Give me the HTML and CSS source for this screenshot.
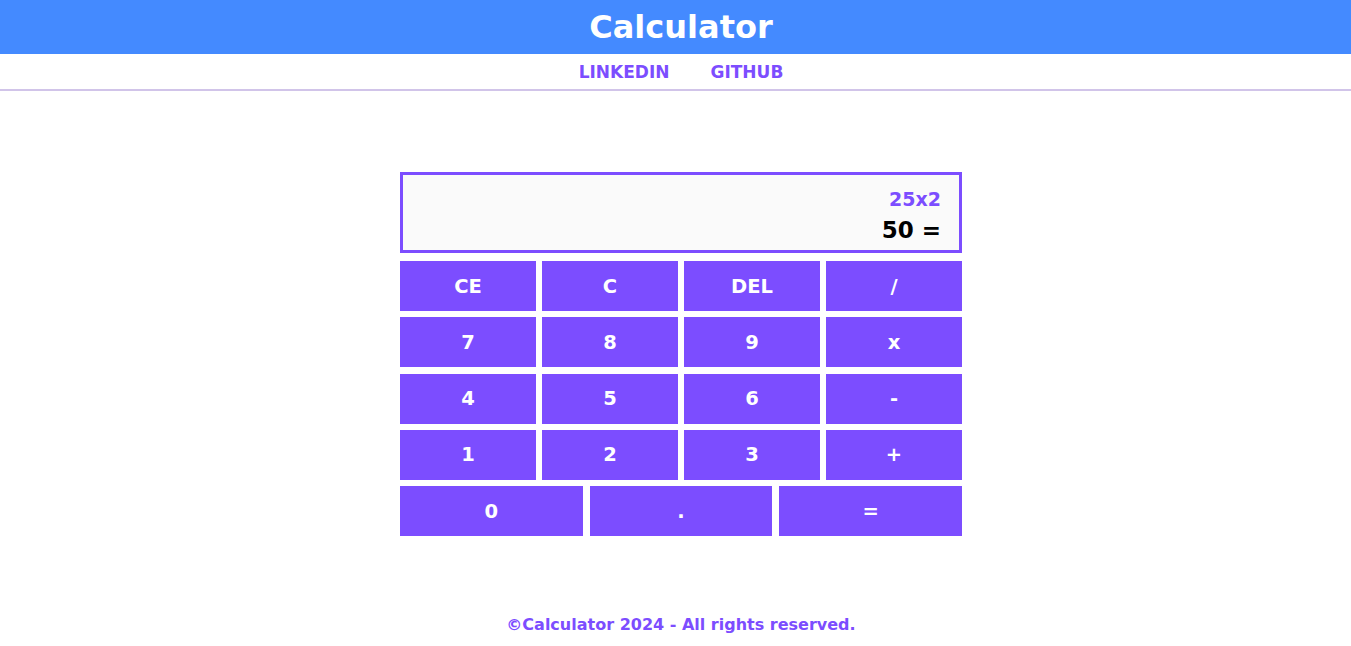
FILE: index.html
```html
<!DOCTYPE html>
<html lang="en">
<head>
<meta charset="utf-8">
<title>Calculator</title>
<link rel="stylesheet" href="styles.css">
</head>
<body>
<header class="site-header">
  <h1 class="title">Calculator</h1>
</header>
<nav class="site-nav">
  <a class="nav-link" href="#">LINKEDIN</a>
  <a class="nav-link" href="#">GITHUB</a>
</nav>
<main class="main">
  <div class="calculator">
    <div class="display">
      <div class="expr">25x2</div>
      <div class="result">50 =</div>
    </div>
    <div class="keys">
      <button class="key">CE</button>
      <button class="key">C</button>
      <button class="key">DEL</button>
      <button class="key">/</button>
      <button class="key">7</button>
      <button class="key">8</button>
      <button class="key">9</button>
      <button class="key">x</button>
      <button class="key">4</button>
      <button class="key">5</button>
      <button class="key">6</button>
      <button class="key">-</button>
      <button class="key">1</button>
      <button class="key">2</button>
      <button class="key">3</button>
      <button class="key">+</button>
    </div>
    <div class="keys-last">
      <button class="key">0</button>
      <button class="key">.</button>
      <button class="key">=</button>
    </div>
  </div>
</main>
<footer class="site-footer">©Calculator 2024 - All rights reserved.</footer>
</body>
</html>
```
FILE: styles.css
```css
* { box-sizing: border-box; }
body {
  margin: 0;
  font-family: "DejaVu Sans", Verdana, sans-serif;
  background: #fff;
}
.site-header,
.site-nav,
.main,
.site-footer {
  padding-left: 11px;
}
.site-header {
  background: #448aff;
  height: 54px;
  display: flex;
  align-items: center;
  justify-content: center;
}
.title {
  margin: 0;
  color: #fff;
  font-size: 32px;
  font-weight: bold;
}
.site-nav {
  height: 37px;
  border-bottom: 2px solid #d1c4e9;
  display: flex;
  justify-content: center;
  align-items: center;
  gap: 41px;
}
.nav-link {
  color: #7c4dff;
  font-weight: bold;
  font-size: 17px;
  text-decoration: none;
}
.main {
  display: flex;
  justify-content: center;
  padding-top: 81px;
}
.calculator {
  width: 562px;
}
.display {
  height: 81px;
  border: 3px solid #7c4dff;
  background: #fafafa;
  padding: 11px 18px 0 0;
  text-align: right;
  font-weight: bold;
  margin-bottom: 8px;
}
.expr {
  color: #7c4dff;
  font-size: 19px;
  line-height: 27px;
}
.result {
  color: #000;
  font-size: 23px;
  line-height: 34px;
}
.keys {
  display: grid;
  grid-template-columns: repeat(4, 1fr);
  column-gap: 6px;
  row-gap: 6.25px;
}
.keys-last {
  display: grid;
  grid-template-columns: repeat(3, 1fr);
  gap: 7px;
  margin-top: 6.25px;
}
.key {
  height: 50px;
  border: none;
  background: #7c4dff;
  color: #fff;
  font-family: "DejaVu Sans", Verdana, sans-serif;
  font-weight: bold;
  font-size: 19.5px;
  padding: 0;
}
.site-footer {
  text-align: center;
  color: #7c4dff;
  font-weight: bold;
  font-size: 16px;
  margin-top: 79px;
}
```
